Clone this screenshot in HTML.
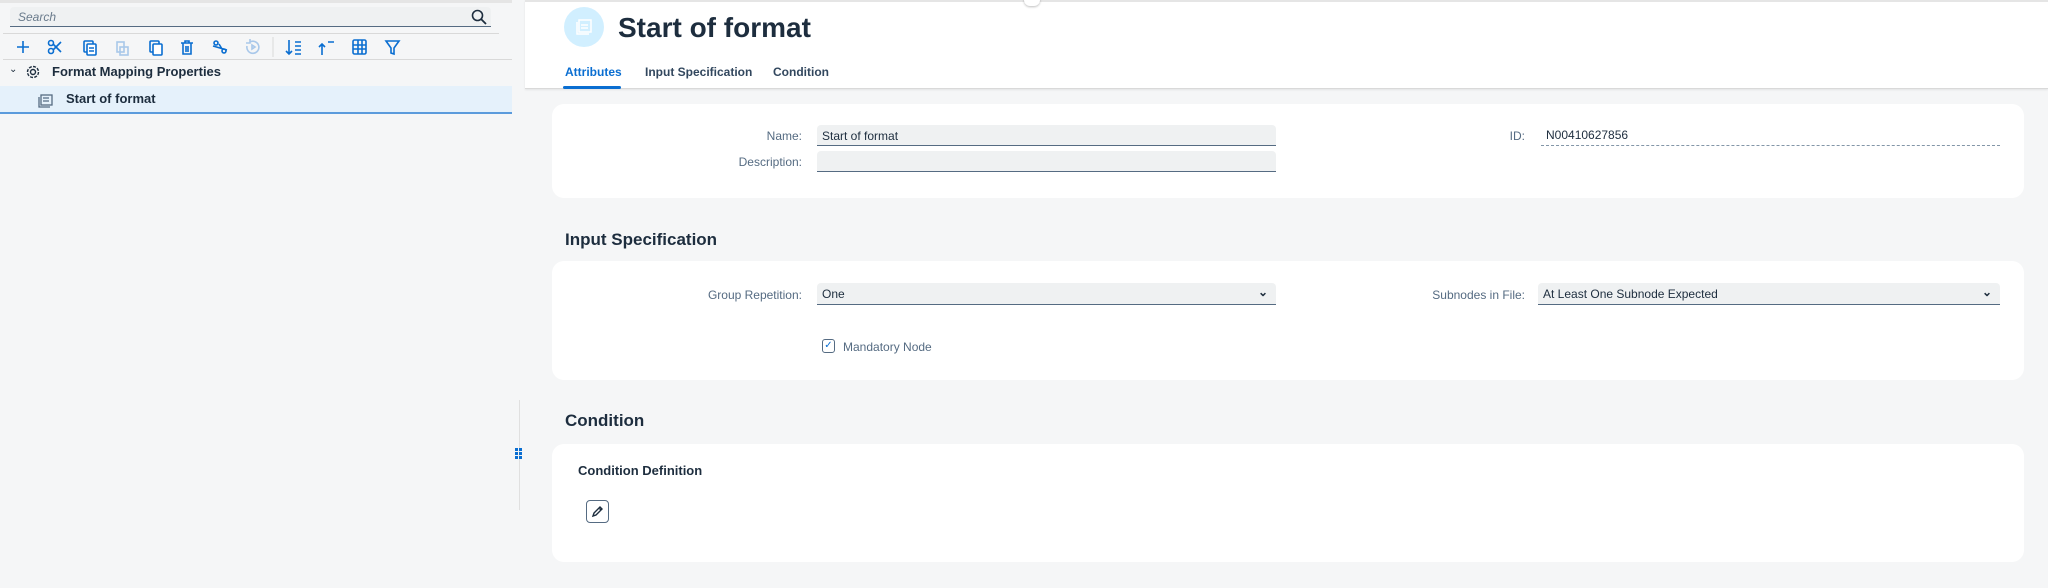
<!DOCTYPE html>
<html><head><meta charset="utf-8"><style>
*{box-sizing:border-box;margin:0;padding:0}
body{width:2048px;height:588px;overflow:hidden;background:#f5f6f7;font-family:"Liberation Sans",sans-serif;color:#1d2d3e;position:relative}
.abs{position:absolute}
.left{left:0;top:0;width:512px;height:588px;background:#f5f6f7}
.lbl{font-size:12px;color:#556b82;text-align:right}
.inp{background:#eff1f2;border-bottom:1px solid #556b82;border-radius:4px 4px 0 0;font-size:12px;padding:6px 5px;color:#1d2d3e}
.card{background:#fff;border-radius:12px;left:552px;width:1472px}
.ic{position:absolute;top:38px;width:18px;height:18px}
</style></head><body>
<div class="abs left">
  <div class="abs" style="left:0;top:0;width:512px;height:3px;background:#e5e5e5"></div>
  <div class="abs" style="left:10px;top:7px;width:481px;height:20px;background:#eff1f2;border-bottom:1px solid #556b82;border-radius:4px 4px 0 0;font-size:12px;font-style:italic;color:#6a7b8c;padding:3px 8px">Search</div>
  <svg class="abs" style="left:471px;top:9px" width="16" height="16" viewBox="0 0 16 16"><circle cx="6.5" cy="6.5" r="5" fill="none" stroke="#1d2d3e" stroke-width="1.6"/><path d="M10 10l5 5" stroke="#1d2d3e" stroke-width="1.8"/></svg>
  <div class="abs" style="left:3px;top:33px;width:496px;height:1px;background:#d9d9d9"></div>
  <svg class="abs" style="left:0;top:36px" width="420" height="22" viewBox="0 0 420 22" fill="none" stroke="#0a6ed1" stroke-width="1.6">
    <path d="M23 5v12M17 11h12"/>
    <circle cx="51" cy="15" r="2.5"/><circle cx="51" cy="7" r="2.5"/><path d="M53 14l8-8M53 8l8 8"/>
    <rect x="84" y="5" width="9" height="11" rx="1"/><rect x="87" y="8" width="9" height="11" rx="1" fill="#fff"/><path d="M89 12h5M89 15h5"/>
    <g stroke="#a9c8ea"><rect x="117" y="6" width="7" height="10"/><rect x="120" y="11" width="8" height="8"/></g>
    <rect x="150" y="5" width="9" height="11" rx="1"/><rect x="153" y="8" width="9" height="11" rx="1" fill="#fff"/>
    <path d="M181 7h12M185 7V5h4v2M183 7v11h8V7M186 10v6M188 10v6"/>
    <circle cx="216" cy="7" r="2"/><circle cx="224" cy="15" r="2"/><path d="M213 10l14 4M219 8l3 5"/>
    <g stroke="#a9c8ea"><path d="M250 6a6 6 0 1 1-3 4M250 3v4h-4"/><path d="M252 9l3 2-3 2z"/></g>
    <path d="M273 1v20" stroke="#d9d9d9" stroke-width="1"/>
    <path d="M289 4v14M286 15l3 3 3-3M295 6h6M295 10h6M295 14h6M295 18h6"/>
    <path d="M322 8v11M319 11l3-3 3 3M328 6h6"/>
    <rect x="353" y="4" width="13" height="14" rx="1.5"/><path d="M353 9h13M353 13h13M358 4v14M362 4v14"/>
    <path d="M386 5h13l-5 7v6l-3-1v-5z"/>
  </svg>
  <div class="abs" style="left:3px;top:59px;width:509px;height:1px;background:#d9d9d9"></div>
  <div class="abs" style="left:9px;top:64px;font-size:10px;color:#1d2d3e">⌄</div>
  <svg class="abs" style="left:25px;top:64px" width="16" height="16" viewBox="0 0 16 16"><circle cx="8" cy="8" r="2.5" fill="none" stroke="#1d2d3e" stroke-width="1.4"/><circle cx="8" cy="8" r="5.5" fill="none" stroke="#1d2d3e" stroke-width="1.4" stroke-dasharray="3 1.3"/></svg>
  <div class="abs" style="left:52px;top:64px;font-size:13px;font-weight:bold">Format Mapping Properties</div>
  <div class="abs" style="left:0;top:86px;width:512px;height:28px;background:#e5f1fb;border-bottom:2px solid #5b9bdc"></div>
  <svg class="abs" style="left:38px;top:92px" width="16" height="16" viewBox="0 0 16 16" fill="none" stroke="#556b82" stroke-width="1.3"><rect x="3" y="3" width="11" height="10"/><path d="M1 5v10h11M5 6h6M5 9h6"/></svg>
  <div class="abs" style="left:66px;top:91px;font-size:13px;font-weight:bold">Start of format</div>
  <div class="abs" style="left:519px;top:400px;width:1px;height:110px;background:#e0e0e0"></div>
  <svg class="abs" style="left:515px;top:448px" width="8" height="14"><g fill="#0a6ed1"><rect x="0" y="0" width="3" height="3"/><rect x="4" y="0" width="3" height="3"/><rect x="0" y="4" width="3" height="3"/><rect x="4" y="4" width="3" height="3"/><rect x="0" y="8" width="3" height="3"/><rect x="4" y="8" width="3" height="3"/></g></svg>
</div>
<div class="abs" style="left:525px;top:0;width:1523px;height:89px;background:#fff;border-bottom:1px solid #d9d9d9;box-shadow:0 1px 2px rgba(0,0,0,.08)"></div>
<div class="abs" style="left:525px;top:0;width:1523px;height:2px;background:#e5e5e5"></div>
<div class="abs" style="left:1024px;top:-6px;width:16px;height:12px;background:#fff;border-radius:0 0 6px 6px;box-shadow:0 1px 2px rgba(0,0,0,.25)"></div>
<div class="abs" style="left:564px;top:7px;width:40px;height:40px;border-radius:50%;background:#d1efff"></div>
<svg class="abs" style="left:574px;top:17px" width="20" height="20" viewBox="0 0 20 20" fill="none" stroke="#fff" stroke-width="1.5"><rect x="5" y="3" width="12" height="12"/><path d="M3 5v12h12M7 8h7M7 11h7"/></svg>
<div class="abs" style="left:618px;top:12px;font-size:28px;font-weight:bold;color:#1d2d3e">Start of format</div>
<div class="abs" style="left:565px;top:65px;font-size:12px;font-weight:bold;color:#0a6ed1">Attributes</div>
<div class="abs" style="left:563px;top:86px;width:58px;height:3px;background:#0a6ed1;border-radius:2px"></div>
<div class="abs" style="left:645px;top:65px;font-size:12px;font-weight:bold;color:#32475e">Input Specification</div>
<div class="abs" style="left:773px;top:65px;font-size:12px;font-weight:bold;color:#32475e">Condition</div>

<div class="abs card" style="top:104px;height:94px"></div>
<div class="abs lbl" style="left:650px;width:152px;top:129px">Name:</div>
<div class="abs inp" style="left:817px;top:125px;width:459px;height:21px;padding-top:4px">Start of format</div>
<div class="abs lbl" style="left:650px;width:152px;top:155px">Description:</div>
<div class="abs inp" style="left:817px;top:151px;width:459px;height:21px"></div>
<div class="abs lbl" style="left:1440px;width:85px;top:129px">ID:</div>
<div class="abs" style="left:1546px;top:128px;font-size:12px">N00410627856</div>
<div class="abs" style="left:1541px;top:145px;width:459px;border-top:1px dashed #8396a8"></div>

<div class="abs" style="left:565px;top:230px;font-size:17px;font-weight:bold">Input Specification</div>
<div class="abs card" style="top:261px;height:119px"></div>
<div class="abs lbl" style="left:650px;width:152px;top:288px">Group Repetition:</div>
<div class="abs inp" style="left:817px;top:283px;width:459px;height:22px;padding-top:4px">One<span style="position:absolute;right:8px;top:2px;font-weight:bold">⌄</span></div>
<div class="abs lbl" style="left:1380px;width:145px;top:288px">Subnodes in File:</div>
<div class="abs inp" style="left:1538px;top:283px;width:462px;height:22px;padding-top:4px">At Least One Subnode Expected<span style="position:absolute;right:8px;top:2px;font-weight:bold">⌄</span></div>
<div class="abs" style="left:822px;top:339px;width:13px;height:14px;border:1px solid #556b82;border-radius:3px;font-size:10px;color:#0a6ed1;text-align:center;line-height:12px">✓</div>
<div class="abs" style="left:843px;top:340px;font-size:12px;color:#556b82">Mandatory Node</div>

<div class="abs" style="left:565px;top:411px;font-size:17px;font-weight:bold">Condition</div>
<div class="abs card" style="top:444px;height:118px"></div>
<div class="abs" style="left:578px;top:463px;font-size:13px;font-weight:bold">Condition Definition</div>
<div class="abs" style="left:586px;top:500px;width:23px;height:23px;border:1px solid #556b82;border-radius:4px;background:#fff"></div>
<svg class="abs" style="left:590px;top:504px" width="15" height="15" viewBox="0 0 15 15" fill="none" stroke="#1d2d3e" stroke-width="1.4"><path d="M3 12l1-3 6-6 2 2-6 6zM9 4l2 2"/></svg>
</body></html>
